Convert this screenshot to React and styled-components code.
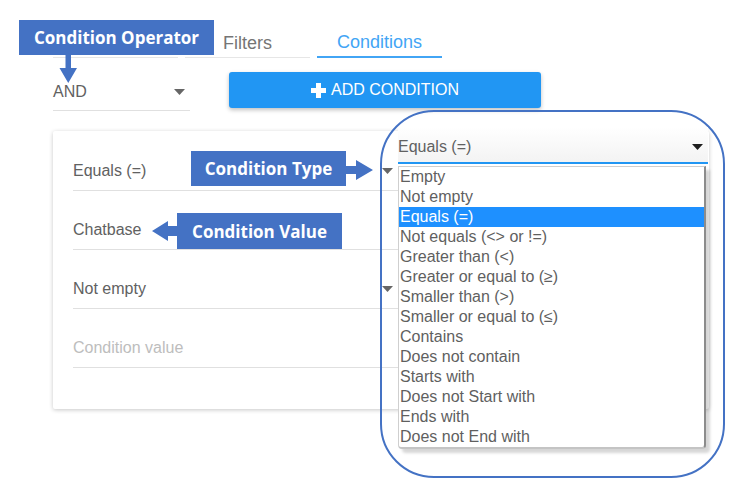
import * as React from "react"
import styled, { createGlobalStyle } from "styled-components"

const GlobalStyle = createGlobalStyle`
  html, body {
    margin: 0;
    padding: 0;
    background: #ffffff;
  }
  body {
    font-family: "Liberation Sans", Arial, sans-serif;
    color: #616161;
  }
`

const OPTIONS = [
  "Empty",
  "Not empty",
  "Equals (=)",
  "Not equals (<> or !=)",
  "Greater than (<)",
  "Greater or equal to (≥)",
  "Smaller than (>)",
  "Smaller or equal to (≤)",
  "Contains",
  "Does not contain",
  "Starts with",
  "Does not Start with",
  "Ends with",
  "Does not End with",
]

const Caret = ({ dark }) => (
  <svg width="11" height="6" viewBox="0 0 11 6">
    <polygon points="0,0 11,0 5.5,6" fill={dark ? "#1f1f1f" : "#666666"} />
  </svg>
)

const PlusIcon = () => (
  <svg width="15" height="15" viewBox="0 0 15 15">
    <rect x="5" y="0" width="5" height="15" fill="#ffffff" />
    <rect x="0" y="5" width="15" height="5" fill="#ffffff" />
  </svg>
)

const App = () => (
  <>
    <GlobalStyle />
    <Page>
      <Tabs>
        <Tab />
        <Tab>Filters</Tab>
        <Tab $active>Conditions</Tab>
      </Tabs>

      <OperatorRow>
        <OperatorSelect>
          AND
          <Caret />
        </OperatorSelect>
        <AddButton>
          <PlusIcon />
          ADD CONDITION
        </AddButton>
      </OperatorRow>

      <Card>
        <Field>
          Equals (=)
          <Caret />
        </Field>
        <Field>Chatbase</Field>
        <Field>
          Not empty
          <Caret />
        </Field>
        <Field $placeholder>Condition value</Field>
      </Card>

      {/* annotations laid over the screenshot */}
      <Callout $x={19} $y={20} $w={195} $h={35}>
        Condition Operator
      </Callout>
      <Arrow $x={58} $y={55} width="20" height="29" viewBox="0 0 20 29">
        <polygon points="7.5,0 13,0 13,13 19,13 10.25,28 1.5,13 7.5,13" />
      </Arrow>

      <Callout $x={191} $y={151} $w={155} $h={35}>
        Condition Type
      </Callout>
      <Arrow $x={345} $y={160} width="28" height="20" viewBox="0 0 28 20">
        <polygon points="0,6 11,6 11,0 28,10 11,20 11,14 0,14" />
      </Arrow>

      <Callout $x={177} $y={213} $w={165} $h={36}>
        Condition Value
      </Callout>
      <Arrow $x={152} $y={221} width="26" height="20" viewBox="0 0 26 20">
        <polygon points="0,10 16,0 16,5 26,5 26,15 16,15 16,20" />
      </Arrow>

      <Highlight />

      <OpenSelect>
        Equals (=)
        <Caret dark />
      </OpenSelect>
      <ListBox>
        {OPTIONS.map((o) => (
          <Option key={o} $selected={o === "Equals (=)"}>
            {o}
          </Option>
        ))}
      </ListBox>
    </Page>
  </>
)

const Page = styled.div`
  position: relative;
  width: 750px;
  height: 504px;
  overflow: hidden;
  padding-left: 53px;
  box-sizing: border-box;
`

const Tabs = styled.div`
  display: flex;
  gap: 7px;
`

const Tab = styled.div`
  width: 125px;
  height: 58px;
  box-sizing: border-box;
  display: flex;
  align-items: flex-end;
  justify-content: center;
  padding-bottom: 3px;
  font-size: 18px;
  line-height: 21px;
  color: ${(p) => (p.$active ? "#42a5f5" : "#757575")};
  border-bottom: ${(p) =>
    p.$active ? "2px solid #42a5f5" : "1px solid #e6e6e6"};
`

const OperatorRow = styled.div`
  display: flex;
  align-items: flex-start;
  margin-top: 14px;
`

const OperatorSelect = styled.div`
  width: 137px;
  height: 39px;
  box-sizing: border-box;
  display: flex;
  align-items: center;
  justify-content: space-between;
  padding-right: 5px;
  padding-top: 1px;
  font-size: 16px;
  color: #616161;
  border-bottom: 1px solid #e0e0e0;
`

const AddButton = styled.button`
  margin-left: 39px;
  width: 312px;
  height: 36px;
  display: flex;
  align-items: center;
  justify-content: center;
  gap: 5px;
  border: none;
  border-radius: 3px;
  background: #2196f3;
  color: #ffffff;
  font-family: "Liberation Sans", Arial, sans-serif;
  font-size: 16px;
  box-shadow: 0 2px 4px rgba(0, 0, 0, 0.25);
  padding: 0;
`

const Card = styled.div`
  margin-top: 20px;
  width: 656px;
  height: 278px;
  box-sizing: border-box;
  padding: 20px 0 0 20px;
  display: flex;
  flex-direction: column;
  gap: 19px;
  background: #ffffff;
  border-radius: 2px;
  box-shadow: 0 1px 4px rgba(0, 0, 0, 0.22);
`

const Field = styled.div`
  width: 325px;
  height: 40px;
  box-sizing: border-box;
  display: flex;
  align-items: center;
  justify-content: space-between;
  padding-right: 5px;
  font-size: 16px;
  color: ${(p) => (p.$placeholder ? "#bdbdbd" : "#616161")};
  border-bottom: 1px solid #e0e0e0;
`

const Callout = styled.div`
  position: absolute;
  left: ${(p) => p.$x}px;
  top: ${(p) => p.$y}px;
  width: ${(p) => p.$w}px;
  height: ${(p) => p.$h}px;
  display: flex;
  align-items: center;
  justify-content: center;
  background: #4472c4;
  color: #ffffff;
  font-family: "Open Sans", "Noto Sans", sans-serif;
  font-weight: 700;
  font-size: 17px;
  white-space: nowrap;
`

const Arrow = styled.svg`
  position: absolute;
  left: ${(p) => p.$x}px;
  top: ${(p) => p.$y}px;
  fill: #4472c4;
`

const Highlight = styled.div`
  position: absolute;
  left: 380px;
  top: 110px;
  width: 345px;
  height: 368px;
  box-sizing: border-box;
  border: 2px solid #4472c4;
  border-radius: 54px;
`

const OpenSelect = styled.div`
  position: absolute;
  left: 398px;
  top: 127px;
  width: 310px;
  height: 37px;
  box-sizing: border-box;
  display: flex;
  align-items: center;
  justify-content: space-between;
  padding: 4px 5px 0 0;
  font-size: 16px;
  color: #616161;
  background: linear-gradient(180deg, #ffffff 0%, #f3f3f3 100%);
  border-bottom: 2px solid #2196f3;
`

const ListBox = styled.div`
  position: absolute;
  left: 398px;
  top: 166px;
  width: 308px;
  box-sizing: border-box;
  background: #ffffff;
  border: 1px solid #cfcfcf;
  border-right: 2px solid #8c8c8c;
  border-bottom: 2px solid #c4c4c4;
  border-radius: 0 0 4px 4px;
  box-shadow: 4px 4px 3px rgba(0, 0, 0, 0.16);
`

const Option = styled.div`
  height: 20px;
  line-height: 20px;
  padding-left: 1px;
  font-size: 16px;
  white-space: nowrap;
  color: ${(p) => (p.$selected ? "#ffffff" : "#5f5f5f")};
  background: ${(p) => (p.$selected ? "#1e90ff" : "transparent")};
`

export default App
